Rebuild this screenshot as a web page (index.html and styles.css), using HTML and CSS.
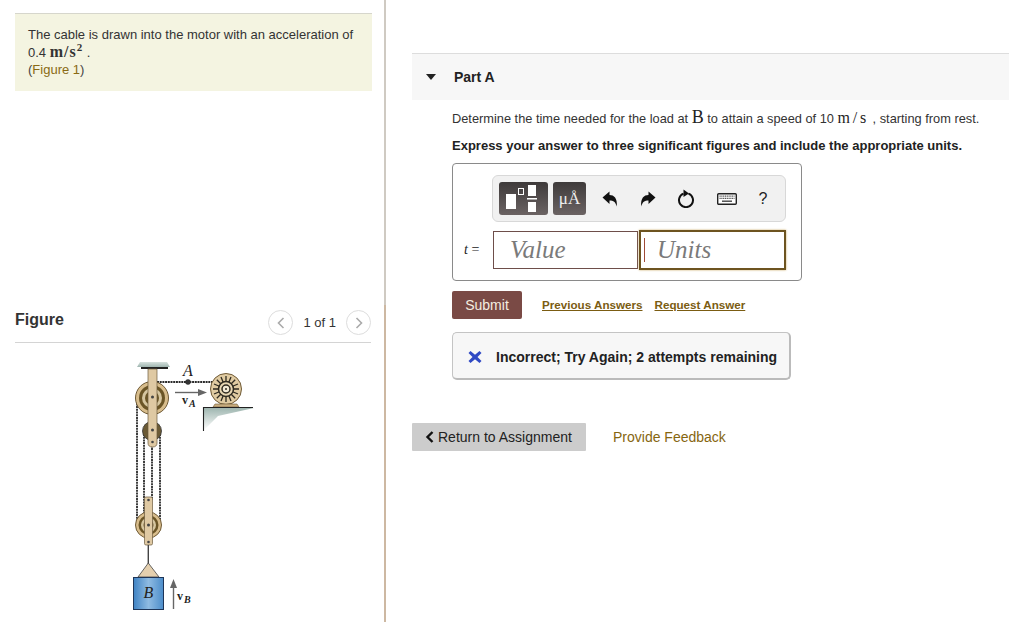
FILE: index.html
```html
<!DOCTYPE html>
<html lang="en">
<head>
<meta charset="utf-8">
<title>Part A</title>
<link rel="stylesheet" href="styles.css">
</head>
<body>
<div class="page">
  <aside class="left">
    <div class="intro">
      <p>The cable is drawn into the motor with an acceleration of<br><span class="num">0.4</span> <span class="math">m/s<sup>2</sup></span> <span class="dot">.</span><br><a class="figlink">(<span>Figure 1</span>)</a></p>
    </div>
    <div class="fighead">
      <h2>Figure</h2>
      <div class="pager">
        <span class="circ"><svg width="8" height="12" viewBox="0 0 8 12"><path d="M6.500 1 1.500 6l5 5" fill="none" stroke="#aaa" stroke-width="1.600"/></svg></span>
        <span class="count">1 of 1</span>
        <span class="circ"><svg width="8" height="12" viewBox="0 0 8 12"><path d="M1.500 1l5 5-5 5" fill="none" stroke="#aaa" stroke-width="1.600"/></svg></span>
      </div>
    </div>
    <svg class="diagram" width="160" height="279" viewBox="0 0 160 279">
      <defs>
        <linearGradient id="blue" x1="0" x2="1" y1="0" y2="0"><stop offset="0" stop-color="#3f83c4"/><stop offset=".5" stop-color="#8fbbe2"/><stop offset="1" stop-color="#4c8dca"/></linearGradient>
        <linearGradient id="shade" x1="0" x2="0" y1="0" y2="1"><stop offset="0" stop-color="#9fb6b0"/><stop offset="1" stop-color="#fff"/></linearGradient>
        <linearGradient id="hatch" x1="0" x2="0" y1="0" y2="1"><stop offset="0" stop-color="#d5e0dc"/><stop offset="1" stop-color="#9fb5b0"/></linearGradient>
      </defs>
      <path d="M94 58h50l-36 8-14 14z" fill="url(#shade)"/>
      <path d="M27 17h33l-3-5H30z" fill="url(#hatch)"/>
      <rect x="31" y="17" width="27" height="2" fill="#222"/>
      <g fill="none" stroke="#2a2a2a" stroke-width="1.800" stroke-dasharray="2 .7">
        <path d="M27 48V178"/><path d="M34 84V170"/><path d="M42 90V150"/><path d="M50 84V170"/><path d="M47 32H106"/>
      </g>
      <circle cx="42" cy="48" r="16.500" fill="#d8bd8c" stroke="#6f5a36"/>
      <circle cx="42" cy="48" r="13" fill="#6b5526"/>
      <circle cx="42" cy="48" r="10" fill="#d6c6a0"/>
      <circle cx="42" cy="48" r="7" fill="#6b5526"/>
      <circle cx="42" cy="81" r="9.500" fill="#6b5a35" stroke="#333" stroke-width=".8"/>
      <path d="M38 19h9v74q0 4-4.500 4t-4.500-4z" fill="#dfc9a3" stroke="#6b5a3d" stroke-width=".7"/>
      <circle cx="42.500" cy="47" r="1.500" fill="#444"/><circle cx="42.500" cy="80" r="1.500" fill="#444"/><circle cx="42.500" cy="92" r="1.300" fill="#444"/>
      <circle cx="38.500" cy="175" r="13" fill="#d8bd8c" stroke="#6f5a36"/>
      <circle cx="38.500" cy="175" r="10" fill="#6b5526"/>
      <circle cx="38.500" cy="175" r="7.500" fill="#d6c6a0"/>
      <circle cx="38.500" cy="175" r="5" fill="#6b5526"/>
      <rect x="34.500" y="147" width="8" height="48" rx="1.500" fill="#dfc9a3" stroke="#6b5a3d" stroke-width=".7"/>
      <circle cx="38.500" cy="150" r="1.300" fill="#444"/><circle cx="38.500" cy="175" r="1.500" fill="#444"/><circle cx="38.500" cy="192" r="1.300" fill="#444"/>
      <path d="M38.300 195V214" stroke="#444" stroke-width="1.400"/>
      <path d="M38.300 213 28 227H49z" fill="#e4cfae" stroke="#444" stroke-width=".8"/>
      <rect x="23.500" y="227.500" width="30" height="32" fill="url(#blue)" stroke="#1e3558"/>
      <text x="38.500" y="248" class="it big" text-anchor="middle">B</text>
      <path d="M63.500 259V236" stroke="#666" stroke-width="1.400"/><path d="M63.500 229l3.500 9h-7z" fill="#666"/>
      <text x="67" y="250" class="bv">v</text><text x="74" y="253" class="it sm">B</text>
      <circle cx="116" cy="39" r="15.500" fill="#e0cba2" stroke="#6f5a36"/>
      <path d="M116 26v26M103 39h26M106.800 29.800l18.400 18.400M125.200 29.800l-18.400 18.400M111 27l10 24M121 27l-10 24M104 34l24 10M128 34l-24 10" stroke="#2e2a20" stroke-width="1.300"/>
      <circle cx="116" cy="39" r="7.500" fill="#e7d6b2" stroke="#2e2a20" stroke-width="1.500"/><circle cx="116" cy="39" r="4" fill="#f2e9d4" stroke="#2e2a20" stroke-width="1.500"/><circle cx="116" cy="39" r="1" fill="#2e2a20"/>
      <path d="M103 57l2-3h22l2 3z" fill="#c8ad80" stroke="#6f5a36" stroke-width=".6"/>
      <path d="M93.500 81V57.500H143" fill="none" stroke="#222" stroke-width="1.100"/>
      <circle cx="78" cy="32" r="2.700" fill="#333"/>
      <text x="78" y="26" class="it big" text-anchor="middle">A</text>
      <path d="M65 42.500H90" stroke="#666" stroke-width="1.400"/><path d="M97 42.500l-9-3.500v7z" fill="#666"/>
      <text x="72" y="54" class="bv">v</text><text x="79" y="57" class="it sm">A</text>
    </svg>
  </aside>
  <main class="right">
    <div class="parthead"><span class="tri"></span><h3>Part A</h3></div>
    <section class="body">
      <p class="q">Determine the time needed for the load at <span class="mathb">B</span> to attain a speed of 10 <span class="mathb mps">m/s</span> , starting from rest.</p>
      <p class="ins">Express your answer to three significant figures and include the appropriate units.</p>
      <div class="answer">
        <div class="toolbar">
          <span class="tbtn wide"><svg width="49" height="33" viewBox="0 0 49 33"><rect x="7" y="12" width="10" height="15" fill="#fff"/><rect x="19.500" y="6.500" width="5" height="6" fill="none" stroke="#fff"/><rect x="29" y="3" width="8" height="11" fill="#fff"/><rect x="28" y="16" width="10" height="1.500" fill="#fff"/><rect x="29" y="20" width="8" height="10" fill="#fff"/></svg></span>
          <span class="tbtn mu">μÅ</span>
          <span class="icons">
            <svg width="16" height="16" viewBox="0 0 16 16"><path d="M.5 6.500 7.500 .5V4C12 4 15.500 7 14.800 15.500 13.500 11 11.500 9.500 7.500 9.500V13z" fill="#111"/></svg>
            <svg width="16" height="16" viewBox="0 0 16 16"><path d="M15.500 6.500 8.500 .5V4C4 4 .5 7 1.200 15.500 2.500 11 4.500 9.500 8.500 9.500V13z" fill="#111"/></svg>
            <svg width="18" height="19" viewBox="0 0 18 19"><path d="M6.500 4.600a7 7 0 1 0 5 0" fill="none" stroke="#111" stroke-width="2"/><path d="M6.500 .5v7.500L12 4.500z" fill="#111"/></svg>
            <svg width="20" height="12" viewBox="0 0 20 12"><rect x=".7" y=".7" width="18.600" height="10.600" rx="1" fill="#fff" stroke="#222" stroke-width="1.400"/><path d="M2.500 3.200h15M2.500 5.400h15" stroke="#555" stroke-width="1.200" stroke-dasharray="1.200 .6"/><path d="M5 8.200h10" stroke="#444" stroke-width="1.400"/></svg>
            <span class="help">?</span>
          </span>
        </div>
        <div class="inputs">
          <label class="var"><i>t</i> =</label>
          <span class="field">Value</span>
          <span class="field focus"><b class="caret"></b>Units</span>
        </div>
      </div>
      <div class="actions">
        <span class="submit">Submit</span>
        <a class="lnk">Previous Answers</a>
        <a class="lnk">Request Answer</a>
      </div>
      <div class="feedback">
        <svg width="14" height="14" viewBox="0 0 14 14"><path d="M2.500 1 7 4.800 11.500 1 13.500 3 9.500 7 13.500 11 11.500 13 7 9.200 2.500 13 .5 11 4.500 7 .5 3z" fill="#2f49c4"/></svg>
        <span>Incorrect; Try Again; 2 attempts remaining</span>
      </div>
    </section>
    <div class="footer">
      <span class="ret"><svg width="9" height="12" viewBox="0 0 9 12"><path d="M7.500 1 2.500 6l5 5" fill="none" stroke="#111" stroke-width="2.400"/></svg>Return to Assignment</span>
      <a class="pf">Provide Feedback</a>
    </div>
  </main>
</div>
</body>
</html>
```
FILE: styles.css
```css
* { box-sizing: border-box; }
html, body { margin: 0; padding: 0; background: #fff; }
body { font-family: "Liberation Sans", Arial, sans-serif; color: #222; width: 1009px; height: 622px; overflow: hidden; }
p, h2, h3 { margin: 0; }
.page { display: flex; height: 622px; }
.left { width: 386px; flex: none; padding: 13px 14px 0 15px; border-right: 2px solid; border-image: linear-gradient(#cfcac2 49%, #cdb8a2 49%) 1; }
.intro { background: #f4f4e1; border-top: 1px solid #d6d6cc; width: 357px; height: 78px; padding: 12px 13px 0; font-size: 13px; line-height: 17.500px; color: #333; white-space: nowrap; }
.math { font-family: "Liberation Serif", serif; font-weight: bold; font-size: 16px; line-height: 0; letter-spacing: 1px; }
.math sup { font-size: 11px; line-height: 0; }
.figlink { color: #444; }
.figlink span { color: #8a6a14; }
.fighead { margin-top: 219px; height: 33px; display: flex; align-items: flex-start; justify-content: space-between; border-bottom: 1px solid #d4d4d4; width: 356px; }
.fighead h2 { font-size: 16px; font-weight: bold; color: #333; line-height: 18px; margin-top: 1px; }
.pager { display: flex; align-items: center; }
.circ { width: 25px; height: 25px; border: 1px solid #ddd; border-radius: 50%; display: flex; align-items: center; justify-content: center; }
.count { font-size: 13px; color: #333; margin: 0 10px; }
.diagram { display: block; margin: 7px 0 0 95px; }
.it { font-family: "Liberation Serif", serif; font-style: italic; fill: #222; }
.big { font-size: 16px; }
.sm { font-size: 10px; font-weight: bold; }
.bv { font-family: "Liberation Serif", serif; font-weight: bold; font-size: 12px; fill: #222; }
.right { flex: 1; padding: 53px 0 0 26px; }
.parthead { height: 47px; background: #f7f7f7; border-top: 1px solid #ddd; display: flex; align-items: center; padding-left: 14px; }
.tri { width: 0; height: 0; border-left: 5.500px solid transparent; border-right: 5.500px solid transparent; border-top: 6px solid #222; margin-right: 18px; margin-top: -1px; }
.parthead h3 { font-size: 14px; font-weight: bold; color: #222; }
.body { padding: 10px 0 0 40px; }
.q { font-size: 12.800px; line-height: 18px; color: #333; height: 18px; white-space: nowrap; }
.mathb { font-family: "Liberation Serif", serif; font-size: 18px; line-height: 0; color: #222; }
.mathb.mps { font-size: 16px; letter-spacing: 2.800px; }
.ins { font-size: 13px; font-weight: bold; color: #222; margin-top: 9px; line-height: 18px; white-space: nowrap; }
.answer { width: 350px; height: 118px; margin-top: 8px; border: 1px solid #8a8a8a; border-radius: 4px; padding: 11px 15px 0 39px; }
.toolbar { width: 294px; height: 47px; background: #f1f1f1; border: 1px solid #d8d8d8; border-radius: 6px; display: flex; align-items: center; padding-left: 6px; }
.tbtn { height: 33px; border-radius: 3px; background: linear-gradient(#3e3a3a, #6b6363); color: #eee; display: flex; align-items: center; justify-content: center; }
.wide { width: 49px; }
.mu { width: 33px; margin-left: 5px; font-family: "Liberation Serif", serif; font-size: 17px; }
.icons { display: flex; align-items: center; justify-content: space-between; width: 166px; margin-left: 16px; }
.help { font-size: 16px; color: #222; width: 10px; text-align: center; }
.inputs { display: flex; align-items: center; margin-top: 8px; margin-left: 1px; height: 40px; position: relative; }
.var { position: absolute; left: -29px; font-family: "Liberation Serif", serif; font-size: 14px; color: #222; }
.field { height: 38px; width: 145px; border: 1px solid #6e4e4a; background: #fff; font-family: "Liberation Serif", serif; font-style: italic; font-size: 25px; color: #7a7a7a; display: flex; align-items: center; padding-left: 16px; }
.field.focus { width: 147px; height: 40px; margin-left: 1px; border: 2px solid #6d5420; box-shadow: 0 0 2px #c9a860; padding-left: 3px; }
.caret { width: 1px; height: 24px; background: #a04a36; margin-right: 12px; }
.actions { display: flex; align-items: center; margin-top: 10px; height: 28px; }
.submit { width: 70px; height: 28px; background: #7a4a45; color: #f4eee0; font-size: 14px; border-radius: 2px; display: flex; align-items: center; justify-content: center; margin-right: 20px; }
.lnk { font-size: 11.650px; font-weight: bold; color: #7b5c12; text-decoration: underline; margin-right: 12px; margin-bottom: 2px; }
.feedback { width: 339px; height: 48px; margin-top: 13px; padding-top: 2px; background: #f7f7f7; border: 1px solid #c4c4c4; border-bottom: 2px solid #bbb; border-right: 2px solid #bbb; border-radius: 5px; display: flex; align-items: center; padding-left: 15px; gap: 14px; font-size: 14px; font-weight: bold; color: #222; white-space: nowrap; }
.footer { display: flex; align-items: center; margin-top: 43px; }
.ret { width: 174px; height: 28px; background: #ccc; color: #222; font-size: 14px; display: flex; align-items: center; padding-left: 13px; gap: 4px; border-radius: 1px; }
.pf { margin-left: 27px; font-size: 14px; color: #86660f; }
```
